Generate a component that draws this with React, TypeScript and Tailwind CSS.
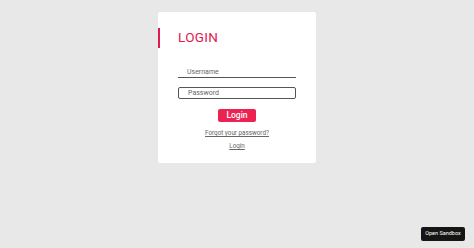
import React from 'react';

export default function App() {
  return (
    <div
      className="relative w-full h-[248px] bg-[#e8e8e8] flex justify-center"
      style={{ fontFamily: 'Roboto, "Liberation Sans", sans-serif' }}
    >
      {/* Card */}
      <div className="mt-[12px] w-[158px] h-[151px] bg-white rounded-[2px] flex flex-col">
        <div className="mt-[16px] flex items-center h-[20px]">
          <div className="w-[2px] h-[20px] bg-[#e0194f]" />
          <h1 className="ml-[18px] text-[13.5px] leading-none text-[#e0194f] tracking-[0.3px]">LOGIN</h1>
        </div>

        <div className="mt-[18px] px-[20px] flex flex-col">
          <input
            placeholder="Username"
            className="h-[12px] w-full border-b border-[#555] pl-[9px] text-[7px] leading-none text-[#333] placeholder:text-[#666] outline-none"
          />
          <input
            type="password"
            placeholder="Password"
            className="mt-[9px] h-[12px] w-full border border-[#555] rounded-[2px] pl-[9px] text-[7px] leading-none text-[#333] placeholder:text-[#666] outline-none"
          />
        </div>

        <div className="mt-[10px] flex justify-center">
          <button className="w-[38px] h-[13px] bg-[#ec2352] rounded-[2px] text-white text-[8.5px] leading-none font-medium">
            Login
          </button>
        </div>

        <div className="mt-[7px] flex flex-col items-center gap-[5px] text-[6.3px] leading-[8px] text-[#666]">
          <a className="underline">Forgot your password?</a>
          <a className="underline">Login</a>
        </div>
      </div>

      {/* Open Sandbox */}
      <button className="absolute left-[421px] top-[227px] w-[44px] h-[14px] bg-[#151515] rounded-[2px] text-white text-[5.5px] leading-none">
        Open Sandbox
      </button>
    </div>
  );
}
